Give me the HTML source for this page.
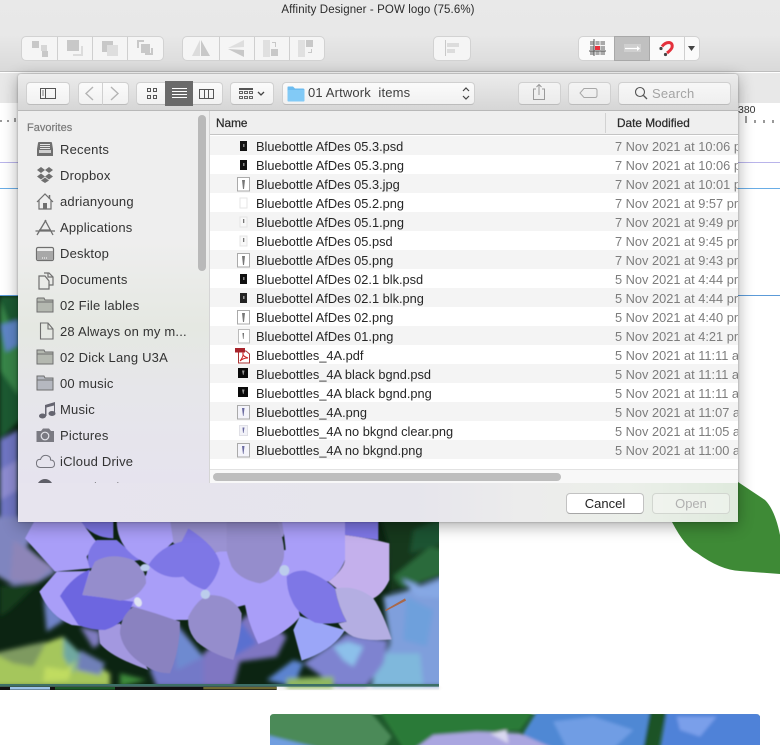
<!DOCTYPE html>
<html><head><meta charset="utf-8"><style>
*{box-sizing:border-box}
html,body{margin:0;padding:0;width:780px;height:745px;overflow:hidden;background:#fff;font-family:"Liberation Sans",sans-serif}
.abs,svg.abs{position:absolute}
#top{position:absolute;left:0;top:0;width:780px;height:72px;background:linear-gradient(#e9e9e9 0,#e8e8e8 35px,#d9d9d9 72px);border-bottom:1px solid #bdbdbd}
#title{position:absolute;left:0;width:756px;top:4px;text-align:center;font-size:11.5px;color:#2b2b2b;letter-spacing:.1px}
#sub{position:absolute;left:0;top:73px;width:780px;height:30px;background:#e8e8e8}
.tb{position:absolute;top:36px;height:25px;background:#f5f5f5;border:1px solid #d2d2d2;border-radius:5px}
.tb i{position:absolute;top:0;bottom:0;width:1px;background:#cfcfcf}
#dlg{position:absolute;left:18px;top:74px;width:720px;height:448px;box-shadow:0 4px 16px rgba(0,0,0,.33),0 0 2px rgba(0,0,0,.3);overflow:hidden;border-radius:3px 3px 0 0}
#dt{position:absolute;left:0;top:0;width:720px;height:37px;background:linear-gradient(#ececec,#d6d6d6);border-bottom:1px solid #b8b8b8}
.b{position:absolute;top:8px;height:23px;background:linear-gradient(#fbfbfb,#f1f1f1);border:1px solid #d0d0d0;border-bottom-color:#bcbcbc;border-radius:4px}
#side{position:absolute;left:0;top:37px;width:192px;height:372px;background:linear-gradient(#eeeeee 0,#eeeeee 35%,#e5e8e2 58%,#e6e6ea 75%,#e6e3ee 100%);overflow:hidden}
#side div{position:absolute;left:42px;font-size:13px;color:#333;white-space:nowrap;letter-spacing:.2px;line-height:16px}
#main{position:absolute;left:191px;top:37px;width:529px;height:372px;background:#fff;border-left:1px solid #d5d5d5;overflow:hidden}
#hd{position:absolute;left:0;top:0;width:528px;height:24px;background:#efefef;border-bottom:1px solid #c4c4c4;font-size:11.8px;color:#2c2c2c;font-weight:400;-webkit-text-stroke:.25px #2c2c2c}
.r{position:absolute;left:0;width:528px;height:19px;white-space:nowrap;overflow:hidden}
.r:nth-child(odd){background:#f4f4f4}
.r b{position:absolute;left:46px;top:3px;font-weight:400;font-size:12.8px;color:#262626;line-height:15px}
.r u{position:absolute;left:405px;top:3px;text-decoration:none;font-size:12.8px;color:#7d7d7d;line-height:15px}
.r svg{position:absolute;left:24px;top:3px}
#bot{position:absolute;left:0;top:409px;width:720px;height:39px;background:linear-gradient(90deg,#e7e4ee 0,#e6e5ec 55%,#ececec 70%,#ebefe9 85%,#dfeadd 100%)}
</style></head><body>

<svg class="abs" style="left:0;top:0" width="780" height="745" viewBox="0 0 780 745">
<defs><filter id="bl" x="-10%" y="-10%" width="120%" height="120%"><feGaussianBlur stdDeviation="7"/></filter>
<filter id="b0" x="-10%" y="-10%" width="120%" height="120%"><feGaussianBlur stdDeviation="2"/></filter>
<filter id="b2"><feGaussianBlur stdDeviation="1.500"/></filter>
<filter id="b3"><feGaussianBlur stdDeviation="5"/></filter>
<clipPath id="ph"><rect x="0" y="296" width="439" height="394"/></clipPath>
<clipPath id="ph2"><path d="M270 745V718Q270 714 274 714H756Q760 714 760 718V745Z"/></clipPath></defs>
<rect x="0" y="103" width="780" height="642" fill="#fff"/>
<rect x="0" y="162" width="780" height="1" fill="#b9b4ea"/>
<rect x="0" y="188" width="780" height="1" fill="#69ade6"/>
<rect x="0" y="295" width="780" height="1" fill="#5c9bd8"/>
<path d="M672 522Q685 547 697 553Q720 570 740 571L780 574V535Q775 510 765 500Q750 490 735 480L660 480Z" fill="#3e8a36"/>
<rect x="278" y="686" width="162" height="4" fill="#f4f2f0" filter="url(#b2)"/>
<g clip-path="url(#ph)">
<rect x="0" y="296" width="440" height="389" fill="#0c2412"/>
<g filter="url(#b0)">
<path d="M0 296H40V400L0 440Z" fill="#1d5a30"/>
<path d="M0 300L18 345V395L0 370Z" fill="#37864a"/>
<path d="M0 325L18 320V345L6 352Z" fill="#5f86c8"/>
<path d="M0 440L18 430L18 522L0 530Z" fill="#6f76c4"/>
<path d="M0 470L18 460V490L0 500Z" fill="#8e8cd2"/>
</g>
<g transform="translate(0,510) scale(.33333)">
<g filter="url(#bl)">
<path d="M-20 20H130L80 110L170 185L120 215L40 225L-20 190Z" fill="#7f85bf"/>
<path d="M40 90L160 170L100 220L30 210Z" fill="#8d85b8"/>
<path d="M0 230L120 215L30 300L0 320Z" fill="#123c1f"/>
<path d="M130 260L195 330L140 365Z" fill="#6f83c8"/>
<path d="M1140 20H1335V200L1170 245L1165 100Z" fill="#12381c"/>
<path d="M1180 200L1290 110L1335 120V190L1210 235Z" fill="#2a6a3a"/>
<path d="M1240 60L1335 20V100L1230 130Z" fill="#1c5230"/>
<path d="M1150 260L1210 245L1335 200V530H1110L1170 400Z" fill="#7f9fdc"/>
<path d="M1205 205L1280 235L1335 210V265L1250 260Z" fill="#86a8e4"/>
<path d="M1220 260L1300 300L1280 410L1210 390Z" fill="#6ea0dc"/>
<path d="M1120 430H1260L1270 530H1120Z" fill="#7fb8dc"/>
<path d="M910 460L1040 370L1165 390L1150 460L1100 530H1010Z" fill="#7e83d0"/>
<path d="M1000 410L1045 395L1090 410L1060 470L1030 450Z" fill="#8cc0ea"/>
<path d="M800 510L880 450L910 460L880 530Z" fill="#5c83d0"/>
<path d="M450 480L520 330L610 440L700 500L650 530H470Z" fill="#7379c8"/>
<path d="M520 340L610 440L530 480Z" fill="#6e8ad0"/>
<path d="M610 430L700 350L760 300L860 380L830 440L720 455L700 530H610Z" fill="#7f76c2"/>
<path d="M720 330L770 400L700 440Z" fill="#5a70d0"/>
<path d="M240 350L300 365L300 400L280 415Z" fill="#7f7cc0"/>
<path d="M-20 430L110 410L160 390L190 380L230 430L330 490L330 530H-20Z" fill="#a5c65c"/>
<path d="M-20 430L90 405L140 395L100 470L40 460Z" fill="#7e9a60"/>
<path d="M190 380L240 430L220 490L190 440Z" fill="#6fa8a0"/>
<path d="M240 420L315 460L300 495L230 480Z" fill="#6f80b8"/>
<path d="M135 470L200 480L225 450L205 510L130 515Z" fill="#c0dc60"/>
<path d="M360 490L440 510L360 530Z" fill="#3e8a3a"/>
<path d="M860 505L1000 500V535H860Z" fill="#8fb860"/>
</g>
<path d="M1155 300L1215 265L1218 272L1158 303Z" fill="#a8684a"/>
<rect x="0" y="522" width="1318" height="8" fill="#3d6f66"/>
<rect x="0" y="530" width="830" height="10" fill="#111"/>
<rect x="30" y="531" width="120" height="8" fill="#9cc4e8"/>
<rect x="165" y="531" width="180" height="8" fill="#1e5a2a"/>
<rect x="610" y="531" width="220" height="7" fill="#6f6a32"/>
<g filter="url(#b2)">
<path d="M235 30Q280 85 340 85V30Z" fill="#7e77e6"/>
<path d="M75 85L105 30H240Q280 85 290 95L260 140L270 175L165 185Z" fill="#a99ef8"/>
<path d="M118 245L170 185L420 180L560 330L500 330L400 290L260 350L215 345Q150 320 118 245Z" fill="#a99ef8"/>
<path d="M290 90H350L420 150L270 175Q250 130 290 90Z" fill="#7e77e6"/>
<path d="M505 30H860L850 80L680 125L660 130L520 100Z" fill="#9a92d2"/>
<path d="M350 30H510L520 95L445 165L420 150Q350 110 350 30Z" fill="#a99ef8"/>
<path d="M440 190L445 165L660 125L860 120L900 320L735 285L560 330L500 330L400 290Z" fill="#a99ef8"/>
<path d="M565 55Q650 110 660 160Q650 210 615 240Q570 225 550 200Q490 210 445 165Q480 110 545 95Z" fill="#7e77e6"/>
<path d="M295 360L360 340L445 480Q330 440 300 400Z" fill="#a398e0"/>
<path d="M180 258Q215 200 270 178L247 255Q330 265 400 275Q380 340 315 360Q270 360 235 345Z" fill="#6d66e0"/>
<path d="M247 255Q265 190 285 155Q330 125 400 150Q440 180 438 220Q410 270 360 272Q300 260 247 255Z" fill="#958dcc"/>
<path d="M400 290Q470 310 540 335Q540 420 510 490Q470 490 440 470Q370 430 360 370Q360 320 400 290Z" fill="#8a82c0"/>
<path d="M625 255Q700 255 725 310Q725 370 700 450Q630 430 590 395Q560 360 565 320Q590 270 625 255Z" fill="#958dcc"/>
<path d="M680 30H830Q860 110 850 150Q830 210 780 220Q720 210 695 170Q680 130 680 120Z" fill="#958dcc"/>
<path d="M985 30H1135V90L1035 75Z" fill="#7e77e6"/>
<path d="M1035 75Q1110 85 1168 100V210Q1150 250 1120 265L1010 235L985 215Q1030 180 1035 150Z" fill="#c4b0ec"/>
<path d="M845 30Q950 30 1035 30V150Q1020 190 985 215L860 190Q860 110 845 30Z" fill="#a99ef8"/>
<path d="M880 360L900 318Q960 340 1035 360Q1000 420 905 452Z" fill="#9ba6f8"/>
<path d="M735 285L860 190L900 320Q860 370 775 402Q745 340 735 285Z" fill="#a99ef8"/>
<path d="M860 200Q880 180 915 182Q970 200 1005 235Q1015 290 1040 335Q980 345 945 338Q890 310 875 270Q860 240 860 200Z" fill="#7e77e6"/>
<path d="M1010 235Q1070 225 1120 265Q1150 310 1175 388Q1100 395 1060 380Q1030 365 1015 340L1040 335Q1015 290 1005 235Z" fill="#b4aee2"/>
<ellipse cx="435" cy="173" rx="14" ry="11" fill="#bccdec"/>
<ellipse cx="853" cy="181" rx="15" ry="16" fill="#bccdec"/>
<circle cx="616" cy="253" r="14" fill="#bccdec"/>
<ellipse cx="414" cy="276" rx="11" ry="15" fill="#dfe4f2" transform="rotate(-25 414 276)"/>
</g>
</g>
</g>
<g clip-path="url(#ph2)">
<g transform="translate(260,680) scale(.33333)">
<rect x="28" y="103" width="1474" height="92" fill="#1f5a2c"/>
<g filter="url(#b3)">
<path d="M20 95H330L395 170L370 205H20Z" fill="#4c8a58"/>
<path d="M20 165L180 205H20Z" fill="#6f9ee0"/>
<path d="M360 95H820L780 150L560 165L460 205H430Z" fill="#2a7a38"/>
<path d="M790 160L830 95H1170L1160 205H800Z" fill="#4f88d4"/>
<path d="M880 125L1000 110L1120 150L1060 205H920Z" fill="#6f9de4"/>
<path d="M1220 95H1510V205H1200Z" fill="#4f82d8"/>
<path d="M1250 110H1370L1320 170L1260 150Z" fill="#7a9fea"/>
<path d="M1170 95H1220L1190 205H1150Z" fill="#1c5228"/>
<path d="M465 205L520 165L650 155L780 160L880 205Z" fill="#aaa6e0"/>
<path d="M690 160L740 150L745 190Z" fill="#dad8f0"/>
</g></g></g>
<text x="738" y="113" font-size="10.5" fill="#333" font-family="Liberation Sans">380</text>
<g stroke="#333" stroke-width="1">
<path d="M746 116V123M755 120V123M764 120V123M773 120V123M1 120V122M8 120V122M15 118V122"/>
</g>
</svg>

<div id="sub"></div>
<div id="top"><div id="title">Affinity Designer - POW logo (75.6%)</div>
<div class="tb" style="left:21px;width:143px"><i style="left:35px"></i><i style="left:70px"></i><i style="left:105px"></i></div>
<div class="tb" style="left:182px;width:143px"><i style="left:36px"></i><i style="left:71px"></i><i style="left:106px"></i></div>
<div class="tb" style="left:433px;width:38px"></div>
<div class="tb" style="left:578px;width:122px;background:#fafafa"><i style="left:105px"></i><div style="position:absolute;left:35px;top:-1px;width:36px;height:25px;background:#c0c0c0;border:1px solid #a8a8a8"></div></div>
<svg class="abs" style="left:0;top:0" width="780" height="72">
<g fill="#c8c8c8">
<rect x="32" y="41" width="7" height="7"/><rect x="41" y="45" width="6" height="6" fill="#d6d6d6"/><rect x="42" y="51" width="6" height="6"/>
<rect x="67" y="40" width="12" height="11"/><path d="M73 56H83V46H81V54H73Z" fill="#dcdcdc"/>
<rect x="102" y="41" width="11" height="11"/><rect x="107" y="45" width="11" height="11" fill="#dedede"/>
<path d="M137 40H144V42H139V48H137Z"/><rect x="141" y="44" width="9" height="9"/><path d="M145 55H153V48H151V53H145Z"/>
<path d="M200 40V56H192Z" fill="#dcdcdc"/><path d="M201 40V56H210Z"/>
<path d="M244 40V47L228 48Z" fill="#dedede"/><path d="M244 50V57L228 49Z"/>
<rect x="263" y="40" width="7" height="17" fill="#e0e0e0"/><rect x="271" y="49" width="7" height="7"/>
<path d="M272 42H276V47H275V43H272Z"/>
<rect x="298" y="40" width="7" height="17" fill="#e0e0e0"/><rect x="306" y="40" width="7" height="7"/>
<path d="M312 49V53H308V52H311V49Z"/>
<rect x="445" y="40" width="1" height="16"/><rect x="447" y="43" width="12" height="4" fill="#dcdcdc"/><rect x="447" y="49" width="8" height="4" fill="#dcdcdc"/>
</g>
<g><rect x="590" y="41" width="15" height="14" fill="#a9a9a9"/>
<path d="M590 45.500H605M590 50.500H605M595 41V55M600 41V55" stroke="#f4f4f4"/>
<rect x="595" y="46" width="5" height="4" fill="#e8303c"/>
<path d="M594 39V56M589 51H606" stroke="#555" fill="none"/></g>
<rect x="624" y="44" width="17" height="8" fill="#cfcfcf"/>
<path d="M625 48.500H639" stroke="#fff" stroke-width="1.200"/><path d="M637 46L640 48.500L637 51Z" fill="#fff"/>
<path d="M662 46.500Q665 42.500 669 42.500Q673 43 672 47.500Q671 50 667 53" fill="none" stroke="#e4313c" stroke-width="3"/>
<circle cx="661" cy="48.500" r="1.600" fill="#444"/><circle cx="665.500" cy="54.500" r="1.600" fill="#444"/>
<path d="M688 46H695L691.500 51Z" fill="#444"/>
</svg>
</div>

<div id="dlg">
<div id="dt">
<div class="b" style="left:8px;width:44px"></div>
<div class="b" style="left:60px;width:25px;border-radius:4px 0 0 4px"></div><div class="b" style="left:85px;width:26px;border-radius:0 4px 4px 0;border-left:none"></div>
<div class="b" style="left:118px;width:87px"></div>
<div class="abs" style="left:147px;top:7px;width:28px;height:25px;background:#6a6a6a"></div>
<div class="b" style="left:212px;width:44px"></div>
<div class="b" style="left:264px;width:193px"></div>
<div class="b" style="left:500px;width:43px;background:linear-gradient(#f4f4f4,#ebebeb)"></div>
<div class="b" style="left:550px;width:43px;background:linear-gradient(#f4f4f4,#ebebeb)"></div>
<div class="b" style="left:600px;width:113px;background:linear-gradient(#f7f7f7,#efefef)"></div>
<div class="abs" style="left:290px;top:11px;font-size:13px;color:#3f3f3f;white-space:pre;letter-spacing:.15px">01 Artwork  items</div>
<div class="abs" style="left:634px;top:12px;font-size:13px;color:#a3a3a3;letter-spacing:.2px">Search</div>
<svg class="abs" style="left:0;top:0" width="720" height="37">
<g fill="none" stroke="#555"><rect x="22.500" y="14.500" width="15" height="10"/><path d="M27.500 14.500V24.500"/><path d="M24 17H26M24 19H26M24 21H26" stroke-width=".8"/></g>
<path d="M75 13L68 19.500L75 26M93 13L100 19.500L93 26" fill="none" stroke="#b4b4b4" stroke-width="1.400"/>
<g fill="none" stroke="#555"><rect x="129.500" y="14.500" width="3" height="3"/><rect x="135.500" y="14.500" width="3" height="3"/><rect x="129.500" y="21.500" width="3" height="3"/><rect x="135.500" y="21.500" width="3" height="3"/></g>
<path d="M154 14.500H169M154 17.500H169M154 20.500H169M154 23.500H169" stroke="#fff"/>
<g fill="none" stroke="#555"><rect x="181.500" y="15.500" width="14" height="9"/><path d="M186.500 15.500V24.500M190.500 15.500V24.500"/></g>
<g fill="none" stroke="#555" stroke-width=".9"><path d="M221 14.500H235M221 15.500H235"/><rect x="221.500" y="17.500" width="3" height="2"/><rect x="226.500" y="17.500" width="3" height="2"/><rect x="231.500" y="17.500" width="3" height="2"/><rect x="221.500" y="22.500" width="3" height="2"/><rect x="226.500" y="22.500" width="3" height="2"/><rect x="231.500" y="22.500" width="3" height="2"/></g>
<path d="M240 18L243 21L246 18" fill="none" stroke="#444" stroke-width="1.300"/>
<path d="M270 12.500H275L277 14.500H285Q286.500 14.500 286.500 16V26Q286.500 27.500 285 27.500H271Q269.500 27.500 269.500 26V13.500Q269.500 12.500 270 12.500Z" fill="#6cbcf0"/>
<rect x="269.500" y="16" width="17" height="11.500" rx="1" fill="#82caf6"/>
<path d="M445 17L448 14L451 17M445 22L448 25L451 22" fill="none" stroke="#444" stroke-width="1.200"/>
<g fill="none" stroke="#9a9a9a"><path d="M518 15H515.500V25.500H526.500V15H524"/><path d="M521 21V10.500M518.500 13L521 10.500L523.500 13"/></g>
<path d="M566 14.500H577Q579 14.500 579 16.500V21.500Q579 23.500 577 23.500H566L562 19Z" fill="none" stroke="#a8a8a8"/>
<circle cx="622" cy="18" r="4.500" fill="none" stroke="#555" stroke-width="1.100"/><path d="M625.500 21.500L629 25" stroke="#555" stroke-width="1.300"/>
</svg>
</div>

<div id="side">
<div style="left:9px;top:9px;font-size:11px;color:#7a7a7a;-webkit-text-stroke:.2px #7a7a7a;letter-spacing:0">Favorites</div>
<div style="top:31px">Recents</div>
<div style="top:57px">Dropbox</div>
<div style="top:83px">adrianyoung</div>
<div style="top:109px">Applications</div>
<div style="top:135px">Desktop</div>
<div style="top:161px">Documents</div>
<div style="top:187px">02 File lables</div>
<div style="top:213px">28 Always on my m...</div>
<div style="top:239px">02 Dick Lang U3A</div>
<div style="top:265px">00 music</div>
<div style="top:291px">Music</div>
<div style="top:317px">Pictures</div>
<div style="top:343px">iCloud Drive</div>
<div style="top:369px">Downloads</div>
<div class="abs" style="left:180px;top:4px;width:8px;height:156px;background:#b9b9b9;border-radius:4px"></div>
<svg class="abs" style="left:0;top:0" width="60" height="372" viewBox="0 111 60 372">
<g fill="#6f6f6f" stroke="none">
<path d="M20 143Q20 142 21 142H33Q34 142 34 143L35 149V156H19V149Z"/><path d="M22 144.500H32M22 146.500H32M22 148.500H32" stroke="#e6e6e6"/><rect x="21" y="150" width="12" height="3" fill="#d0d0d0"/>
<path d="M23 167L27 170L23 173L19 170ZM31 167L35 170L31 173L27 170ZM23 173.500L27 176.500L23 179.500L19 176.500ZM31 173.500L35 176.500L31 179.500L27 176.500ZM27 177.500L31 180.500L27 183L23 180.500Z"/>
</g>
<g fill="none" stroke="#6f6f6f" stroke-width="1.200">
<path d="M19 202L27 194L35 202M21 200V209H33V200"/><path d="M31.500 195V199" stroke-width="1.500"/><rect x="25" y="203" width="4" height="6" fill="#6f6f6f" stroke="none"/>
<path d="M19 235L28 220M35 235L27 220M21 230H33M17.500 231H37" stroke-width="1.300"/>
<rect x="18.500" y="247.500" width="17" height="13" rx="1.500"/><rect x="19" y="251" width="16" height="9" fill="#a8a8a8" stroke="none"/><path d="M24 258H30" stroke="#fff" stroke-dasharray="1 1" stroke-width="1"/>
<path d="M21 276V289H31V281L27 276Z"/><path d="M26 273H31L35 277V285H31"/><path d="M30 273V277H35"/>
</g>
<g fill="#b4b8b0" stroke="#6f6f6f" stroke-width="1">
<path d="M19 299Q19 298 20 298H26L27 300H35V312H19Z"/><path d="M19 302H35"/>
<path d="M19 350Q19 350 20 350H26L27 352H35V364H19Z"/><path d="M19 354H35"/>
<path d="M19 376Q19 376 20 376H26L27 378H35V390H19Z" fill="#b5b8c0"/><path d="M19 380H35"/>
</g>
<path d="M22.500 323H30L35 329V339H22.500Z M30 323V329H35" fill="none" stroke="#6f6f6f" stroke-width="1.100"/>
<g fill="#656570">
<path d="M27 405L37 402V413H36V405.500L28.500 407.500V416H27Z"/><ellipse cx="24.500" cy="416" rx="3.500" ry="2.500"/><ellipse cx="34" cy="413.500" rx="3.500" ry="2.500"/>
<path d="M18.500 431H23L25 428.500H31L33 431H36V442H18.500Z" fill="#7a7a82"/></g>
<circle cx="27" cy="436" r="3.800" fill="none" stroke="#e4e4ea" stroke-width="1.200"/>
<path d="M22 467.500Q18 467 18.500 462.500Q19 459 22.500 459.500Q24 454.500 29 455.500Q33 456.500 32.500 460Q36.500 460 36.500 464Q36.500 467.500 33 467.500Z" fill="none" stroke="#75757d" stroke-width="1"/>
<circle cx="27" cy="487" r="8" fill="#5f5f68"/>
</svg>
</div>

<div id="main">
<div id="hd"><div class="abs" style="left:6px;top:5px">Name</div><div class="abs" style="left:407px;top:5px">Date Modified</div><div class="abs" style="left:395px;top:2px;width:1px;height:20px;background:#d2d2d2"></div></div>
<div class="abs" style="left:0;top:25px;width:528px;height:323px">
<div class="r" style="top:0"><svg width="24" height="17"><rect x="6" y="2" width="7" height="10" fill="#111"/><rect x="9" y="5" width="1.500" height="3" fill="#888"/></svg><b>Bluebottle AfDes 05.3.psd</b><u>7 Nov 2021 at 10:06 pm</u></div>
<div class="r" style="top:19px"><svg width="24" height="17"><rect x="6" y="2" width="7" height="10" fill="#111"/><rect x="9" y="5" width="1.500" height="3" fill="#888"/></svg><b>Bluebottle AfDes 05.3.png</b><u>7 Nov 2021 at 10:06 pm</u></div>
<div class="r" style="top:38px"><svg width="24" height="17"><rect x="3.500" y=".5" width="12" height="13.500" fill="#fff" stroke="#aaa"/><path d="M8 3L11 3L10 12H9Z" fill="#777"/></svg><b>Bluebottle AfDes 05.3.jpg</b><u>7 Nov 2021 at 10:01 pm</u></div>
<div class="r" style="top:57px"><svg width="24" height="17"><rect x="6" y="2" width="7" height="10" fill="#fff" stroke="#e6e6e6"/></svg><b>Bluebottle AfDes 05.2.png</b><u>7 Nov 2021 at 9:57 pm</u></div>
<div class="r" style="top:76px"><svg width="24" height="17"><rect x="6" y="2" width="7" height="10" fill="#f8f8f8" stroke="#e4e4e4"/><rect x="9" y="4" width="1.300" height="4" fill="#777"/></svg><b>Bluebottle AfDes 05.1.png</b><u>7 Nov 2021 at 9:49 pm</u></div>
<div class="r" style="top:95px"><svg width="24" height="17"><rect x="6" y="2" width="7" height="10" fill="#f8f8f8" stroke="#e4e4e4"/><rect x="9" y="4" width="1.300" height="4" fill="#777"/></svg><b>Bluebottle AfDes 05.psd</b><u>7 Nov 2021 at 9:45 pm</u></div>
<div class="r" style="top:114px"><svg width="24" height="17"><rect x="3.500" y=".5" width="12" height="13.500" fill="#fff" stroke="#aaa"/><path d="M8 3L11 3L10 12H9Z" fill="#777"/></svg><b>Bluebottle AfDes 05.png</b><u>7 Nov 2021 at 9:43 pm</u></div>
<div class="r" style="top:133px"><svg width="24" height="17"><rect x="6" y="2" width="7" height="10" fill="#111"/><rect x="9" y="5" width="1.500" height="3" fill="#888"/></svg><b>Bluebottel AfDes 02.1 blk.psd</b><u>5 Nov 2021 at 4:44 pm</u></div>
<div class="r" style="top:152px"><svg width="24" height="17"><rect x="6" y="2" width="7" height="10" fill="#222"/><rect x="9" y="5" width="1.500" height="3" fill="#999"/></svg><b>Bluebottel AfDes 02.1 blk.png</b><u>5 Nov 2021 at 4:44 pm</u></div>
<div class="r" style="top:171px"><svg width="24" height="17"><rect x="3.500" y=".5" width="12" height="13.500" fill="#fff" stroke="#aaa"/><path d="M8 3L11 3L10 12H9Z" fill="#777"/></svg><b>Bluebottel AfDes 02.png</b><u>5 Nov 2021 at 4:40 pm</u></div>
<div class="r" style="top:190px"><svg width="24" height="17"><rect x="4.500" y=".5" width="11" height="13.500" fill="#fff" stroke="#bbb"/><path d="M8.500 4L10 4L9.500 10H9Z" fill="#666"/></svg><b>Bluebottel AfDes 01.png</b><u>5 Nov 2021 at 4:21 pm</u></div>
<div class="r" style="top:209px"><svg width="24" height="17"><path d="M4.500 3H12L15.500 6V15H4.500Z" fill="#fff" stroke="#a33"/><rect x="1" y="0" width="10" height="4.500" fill="#a8242c"/><path d="M6 13Q10 8 9 5Q8 8 14 10Q9 10 6 13Z" fill="none" stroke="#c22" stroke-width="1"/></svg><b>Bluebottles_4A.pdf</b><u>5 Nov 2021 at 11:11 am</u></div>
<div class="r" style="top:228px"><svg width="24" height="17"><rect x="4" y="1" width="10" height="10" fill="#0a0a0a"/><path d="M8 3.500H10.500L9.500 8H9Z" fill="#999"/></svg><b>Bluebottles_4A black bgnd.psd</b><u>5 Nov 2021 at 11:11 am</u></div>
<div class="r" style="top:247px"><svg width="24" height="17"><rect x="4" y="1" width="10" height="10" fill="#0a0a0a"/><path d="M8 3.500H10.500L9.500 8H9Z" fill="#999"/></svg><b>Bluebottles_4A black bgnd.png</b><u>5 Nov 2021 at 11:11 am</u></div>
<div class="r" style="top:266px"><svg width="24" height="17"><rect x="3.500" y=".5" width="12" height="13.500" fill="#f4f4fa" stroke="#aaa"/><path d="M8 3L10.500 3L9.500 11H9Z" fill="#6a6aa0"/></svg><b>Bluebottles_4A.png</b><u>5 Nov 2021 at 11:07 am</u></div>
<div class="r" style="top:285px"><svg width="24" height="17"><rect x="5.500" y="1.500" width="8" height="10" fill="#f2f2f8" stroke="#e0e0e6"/><path d="M8.500 3.500L10.500 3.500L9.500 9H9Z" fill="#6a6aa0"/></svg><b>Bluebottles_4A no bkgnd clear.png</b><u>5 Nov 2021 at 11:05 am</u></div>
<div class="r" style="top:304px"><svg width="24" height="17"><rect x="3.500" y=".5" width="12" height="13.500" fill="#f4f4fa" stroke="#aaa"/><path d="M8 3L10.500 3L9.500 11H9Z" fill="#6a6aa0"/></svg><b>Bluebottles_4A no bkgnd.png</b><u>5 Nov 2021 at 11:00 am</u></div>
</div>
<div class="abs" style="left:0;top:358px;width:528px;height:14px;background:#f8f8f8;border-top:1px solid #e2e2e2"></div>
<div class="abs" style="left:3px;top:362px;width:348px;height:8px;background:#bdbdbd;border-radius:4px"></div>
</div>

<div id="bot">
<div class="abs" style="left:548px;top:10px;width:78px;height:21px;background:#fff;border:1px solid #c2c2c2;border-bottom-color:#a6a6a6;border-radius:4px;text-align:center;font-size:13px;line-height:19px;color:#222">Cancel</div>
<div class="abs" style="left:634px;top:10px;width:78px;height:21px;background:rgba(245,248,244,.55);border:1px solid #d2d6d0;border-radius:4px;text-align:center;font-size:13px;line-height:19px;color:#b0b0b0">Open</div>
</div>
</div>
</body></html>
